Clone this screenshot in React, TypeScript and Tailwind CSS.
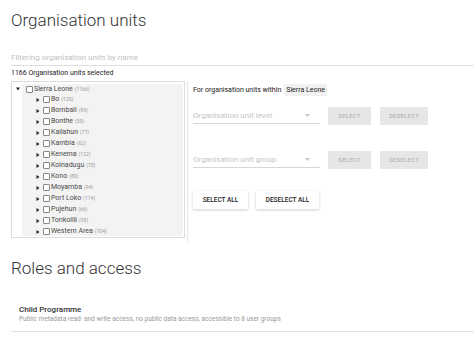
import React from 'react';

const units = [
  { name: 'Bo', count: 125 },
  { name: 'Bombali', count: 99 },
  { name: 'Bonthe', count: 55 },
  { name: 'Kailahun', count: 77 },
  { name: 'Kambia', count: 62 },
  { name: 'Kenema', count: 122 },
  { name: 'Koinadugu', count: 70 },
  { name: 'Kono', count: 80 },
  { name: 'Moyamba', count: 94 },
  { name: 'Port Loko', count: 114 },
  { name: 'Pujehun', count: 66 },
  { name: 'Tonkolili', count: 93 },
  { name: 'Western Area', count: 104 },
];

function Checkbox() {
  return <span className="block w-[7px] h-[7px] border border-[#888] rounded-[1px] bg-white flex-shrink-0" />;
}

function Arrow({ open }: { open?: boolean }) {
  return (
    <svg width="4" height="4" viewBox="0 0 4 4" className="block flex-shrink-0">
      {open ? <polygon points="0,0.5 4,0.5 2,3.5" fill="#222" /> : <polygon points="0.5,0 3.5,2 0.5,4" fill="#222" />}
    </svg>
  );
}

function SelectRow({ label }: { label: string }) {
  return (
    <div className="flex items-start h-[18px]">
      <div className="w-[127px] h-[17px] border-b border-[#d6d6d6] flex items-end justify-between pb-[2px]">
        <span className="text-[8px] text-[#c4c4c4] leading-[10px]">{label}</span>
        <svg width="5" height="3" viewBox="0 0 5 3" className="block mb-[4px] mr-[10px]">
          <polygon points="0,0 5,0 2.5,3" fill="#c8c8c8" />
        </svg>
      </div>
      <button className="ml-[8px] w-[43px] h-[18px] bg-[#e6e6e6] text-[#b5b5b5] text-[6px] leading-[18px] font-medium tracking-[0.2px]">SELECT</button>
      <button className="ml-[9px] w-[48px] h-[18px] bg-[#e6e6e6] text-[#b5b5b5] text-[6px] leading-[18px] font-medium tracking-[0.2px]">DESELECT</button>
    </div>
  );
}

export default function App() {
  return (
    <div className="w-[474px] h-[348px] bg-white pl-[11px] overflow-hidden text-[#333]" style={{ fontFamily: 'Roboto, "Liberation Sans", sans-serif' }}>
      <h1 className="pt-[10px] text-[17px] leading-[20px] font-light text-[#333]">Organisation units</h1>

      <div className="mt-[21px] h-[15px] border-b border-[#e0e0e0] flex items-end pb-[2px]">
        <span className="text-[8px] leading-[10px] text-[#c2c2c2]">Filtering organisation units by name</span>
      </div>

      <div className="mt-[2px] text-[7px] leading-[10px] text-[#222]">1166 Organisation units selected</div>

      <div className="mt-[3px] flex">
        <div className="w-[174px] h-[157px] border border-[#dcdcdc] pl-[4px] pt-[1px] pr-[1px]">
          <div className="flex h-full">
            <div className="w-[5px] pt-[4px]">
              <Arrow open />
            </div>
            <div className="flex-1 bg-[#f3f3f3] mt-[1px] mb-[1px] ml-[1px]">
              <div className="flex items-center h-[10px] pl-[4px]">
                <Checkbox />
                <span className="ml-[1px] text-[7px] leading-[10px] text-[#4a4a4a]">Sierra Leone</span>
                <span className="ml-[2px] text-[5px] leading-[10px] text-[#999]">(1166)</span>
              </div>
              {units.map((u) => (
                <div key={u.name} className="flex items-center h-[11px] pl-[14px]">
                  <Arrow />
                  <span className="ml-[3px] flex items-center"><Checkbox /></span>
                  <span className="ml-[1px] text-[7px] leading-[11px] text-[#4a4a4a]">{u.name}</span>
                  <span className="ml-[2px] text-[5px] leading-[11px] text-[#999]">({u.count})</span>
                </div>
              ))}
            </div>
          </div>
        </div>

        <div className="ml-[2px] border-l border-[#e6e6e6] pl-[5px] h-[162px]">
          <div className="flex items-center mt-[3px] h-[12px]">
            <span className="text-[7px] leading-[12px] text-[#222]">For organisation units within</span>
            <span className="ml-[3px] bg-[#f1f1f1] px-[2px] text-[7px] leading-[12px] text-[#222]">Sierra Leone</span>
          </div>
          <div className="mt-[11px]">
            <SelectRow label="Organisation unit level" />
          </div>
          <div className="mt-[26px]">
            <SelectRow label="Organisation unit group" />
          </div>
          <div className="mt-[22px] flex gap-[8px]">
            <button className="w-[55px] h-[18px] bg-white text-[6.5px] leading-[18px] font-medium text-[#222] shadow-[0_1px_3px_rgba(0,0,0,0.2)]">SELECT ALL</button>
            <button className="w-[63px] h-[18px] bg-white text-[6.5px] leading-[18px] font-medium text-[#222] shadow-[0_1px_3px_rgba(0,0,0,0.2)]">DESELECT ALL</button>
          </div>
        </div>
      </div>

      <h2 className="mt-[15px] text-[17px] leading-[20px] font-light text-[#333]">Roles and access</h2>

      <div className="mt-[27px] pl-[8px] border-b border-[#e2e2e2] pb-[7px]">
        <div className="text-[8px] leading-[10px] font-medium text-[#333]">Child Programme</div>
        <div className="text-[6.5px] leading-[9px] text-[#9a9a9a]">Public metadata read- and write access, no public data access, accessible to 8 user groups</div>
      </div>
    </div>
  );
}
